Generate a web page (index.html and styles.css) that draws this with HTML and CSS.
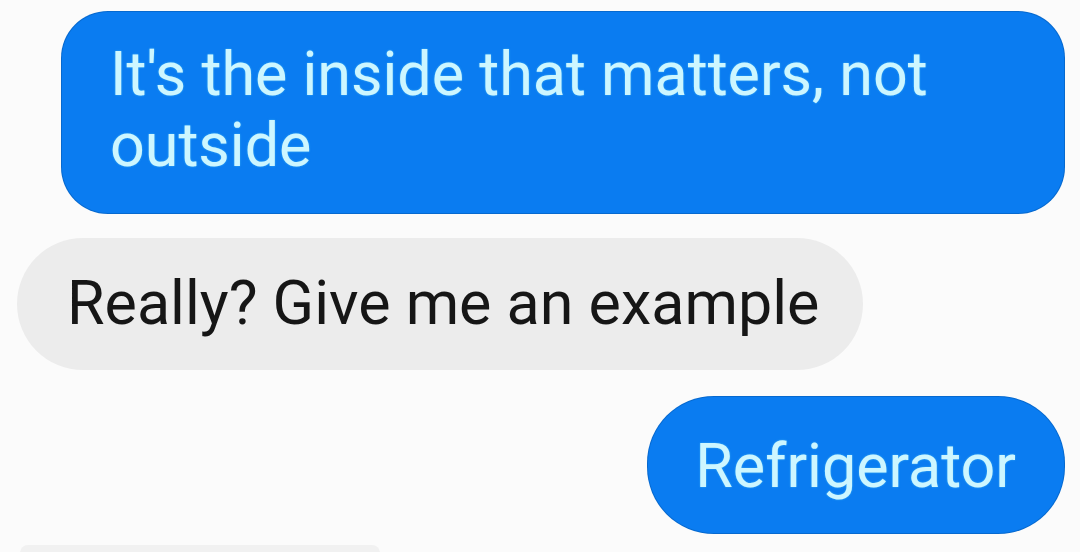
FILE: index.html
```html
<!DOCTYPE html>
<html lang="en">
<head>
  <meta charset="UTF-8" />
  <meta name="viewport" content="width=device-width, initial-scale=1.0"/>
  <title>Chat</title>
  <link rel="stylesheet" href="styles.css">
</head>
<body>
  <div class="thread">
    <div class="bubble sent wide">It's the inside that matters, not outside</div>
    <div class="bubble received">Really? Give me an example</div>
    <div class="bubble sent reply">Refrigerator</div>
  </div>
  <div class="next-row"></div>
</body>
</html>
```

FILE: styles.css
```css
body {
  margin: 0;
  background: #fbfbfb;
  font-family: Roboto, 'Liberation Sans', sans-serif;
  height: 552px;
  overflow: hidden;
}

.thread {
  display: flex;
  flex-direction: column;
  gap: 25px;
  padding: 12px 16px 0 17px;
}

.bubble {
  font-size: 61px;
  line-height: 71px;
  padding: 30px 48px 31px 48px;
  border-radius: 66px;
  box-sizing: border-box;
}

.sent {
  align-self: flex-end;
  background: #0a7cf1;
  color: #cdf6ff;
  text-shadow: 0 0 2px rgba(120, 240, 255, 0.5);
  box-shadow: 0 0 0 1px #0669cf;
}

.wide {
  width: 1002px;
  padding-top: 27px;
  padding-bottom: 32px;
  border-radius: 46px;
}

.reply {
  margin-top: 2px;
  padding-top: 34px;
  padding-bottom: 31px;
  padding-left: 47px;
}

.received {
  align-self: flex-start;
  background: #ececec;
  color: #161616;
  padding-left: 50px;
  padding-right: 44px;
}

.next-row {
  margin: 12px 0 0 20px;
  height: 10px;
  width: 360px;
  background: #f1f1f1;
  border-radius: 8px 8px 0 0;
}
```
